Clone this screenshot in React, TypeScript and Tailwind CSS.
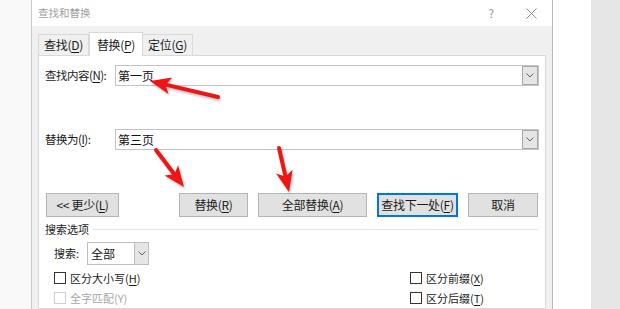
import type { ReactNode } from 'react'

function Key({ children }: { children: ReactNode }) {
  return <span className="underline underline-offset-[2px]">{children}</span>
}

function Chevron() {
  return (
    <svg width="8" height="5" viewBox="0 0 8 5" fill="none">
      <path d="M0.5 0.5 L4 4 L7.5 0.5" stroke="#606060" strokeWidth="1" />
    </svg>
  )
}

function ComboBox({ value }: { value: string }) {
  return (
    <div className="flex-1 h-[21px] flex border border-[#c4c4c4] bg-white">
      <div className="flex-1 flex items-center pl-[2px] text-[12px] text-[#111]">{value}</div>
      <div className="w-[16px] flex items-center justify-center bg-[#e5e5e5] border border-[#a9a9a9]">
        <Chevron />
      </div>
    </div>
  )
}

function Button({ w, primary, children }: { w: string; primary?: boolean; children: ReactNode }) {
  return (
    <div
      className={`${w} h-[24px] flex items-center justify-center text-[12px] tracking-[-0.3px] text-[#1a1a1a] bg-[#e1e1e1] ${
        primary ? 'border-2 border-[#0078d7]' : 'border border-[#b4b4b4]'
      }`}
    >
      {children}
    </div>
  )
}

function Check({ disabled, children }: { disabled?: boolean; children: ReactNode }) {
  return (
    <div className={`flex items-center gap-[4px] h-[16px] text-[11px] ${disabled ? 'text-[#a8a8a8]' : 'text-[#1a1a1a]'}`}>
      <span className={`w-[12px] h-[12px] bg-white border ${disabled ? 'border-[#cfcfcf]' : 'border-[#333]'}`} />
      <span>{children}</span>
    </div>
  )
}

// red annotation arrow: tail -> tip
function Arrow({ x1, y1, x2, y2 }: { x1: number; y1: number; x2: number; y2: number }) {
  const dx = x2 - x1
  const dy = y2 - y1
  const len = Math.hypot(dx, dy)
  const ux = dx / len
  const uy = dy / len
  const px = -uy
  const py = ux
  const head = 21
  const half = 8.5
  const bx = x2 - ux * head
  const by = y2 - uy * head
  const nx = x2 - ux * (head - 5)
  const ny = y2 - uy * (head - 5)
  const pts = [
    [x2, y2],
    [bx + px * half, by + py * half],
    [nx, ny],
    [bx - px * half, by - py * half],
  ]
    .map(p => p.join(','))
    .join(' ')
  return (
    <g>
      <line x1={x1} y1={y1} x2={nx} y2={ny} stroke="#f01515" strokeWidth="4" strokeLinecap="round" />
      <polygon points={pts} fill="#f01515" />
    </g>
  )
}

export default function App() {
  return (
    <div className="relative flex w-[620px] h-[309px] overflow-hidden bg-white font-['Noto_Sans_CJK_SC','Noto_Sans',sans-serif] leading-none">
      <div className="w-[32px] bg-[#f9f9f9] border-r border-[#cdcdcd]" />

      {/* Dialog */}
      <div className="w-[521px] flex flex-col border-r border-[#b9b9b9] shadow-[2px_0_5px_rgba(0,0,0,0.08)]">
        <div className="h-[26px] flex items-center bg-white pl-[6px] pr-[15px]">
          <span className="text-[10.5px] text-[#a0a0a0]">查找和替换</span>
          <span className="ml-auto text-[11px] text-[#8c8c8c]">?</span>
          <svg className="ml-[32px]" width="11" height="11" viewBox="0 0 11 11">
            <path d="M0.5 0.5 L10.5 10.5 M10.5 0.5 L0.5 10.5" stroke="#8c8c8c" strokeWidth="1" />
          </svg>
        </div>

        <div className="flex-1 flex flex-col bg-[#f0f0f0] px-[6px] pt-[6px]">
          {/* Tabs */}
          <div className="flex items-end h-[23px] text-[12px] tracking-[-0.3px] text-[#1a1a1a]">
            <div className="w-[51px] h-[21px] flex items-center justify-center border border-b-0 border-[#d9d9d9]">
              查找(<Key>D</Key>)
            </div>
            <div className="relative z-10 -mb-px w-[54px] h-[24px] flex items-center justify-center bg-white border border-b-0 border-[#d9d9d9]">
              替换(<Key>P</Key>)
            </div>
            <div className="w-[50px] h-[21px] flex items-center justify-center border border-b-0 border-l-0 border-[#d9d9d9]">
              定位(<Key>G</Key>)
            </div>
          </div>

          {/* Panel */}
          <div className="flex-1 flex flex-col bg-white border border-[#d9d9d9] px-[6px] pt-[9px]">
            <div className="flex items-center">
              <span className="w-[70px] text-[11.5px] tracking-[-0.5px] text-[#1a1a1a]">
                查找内容(<Key>N</Key>):
              </span>
              <ComboBox value="第一页" />
            </div>

            <div className="flex items-center mt-[43px]">
              <span className="w-[70px] text-[11.5px] tracking-[-0.5px] text-[#1a1a1a]">
                替换为(<Key>I</Key>):
              </span>
              <ComboBox value="第三页" />
            </div>

            <div className="flex mt-[43px] pl-[1px]">
              <Button w="w-[73px]">
                {'<< 更少('}
                <Key>L</Key>)
              </Button>
              <div className="ml-auto flex gap-[10px] mr-[1px]">
                <Button w="w-[69px]">
                  替换(<Key>R</Key>)
                </Button>
                <Button w="w-[109px]">
                  全部替换(<Key>A</Key>)
                </Button>
                <Button w="w-[81px]" primary>
                  查找下一处(<Key>F</Key>)
                </Button>
                <Button w="w-[70px]">取消</Button>
              </div>
            </div>

            <div className="flex items-center gap-[4px] h-[14px] mt-[5px] pr-[1px]">
              <span className="text-[11px] text-[#1a1a1a]">搜索选项</span>
              <div className="flex-1 h-px bg-[#e3e3e3]" />
            </div>

            <div className="flex items-center mt-[6px] pl-[9px]">
              <span className="w-[33px] text-[11px] text-[#1a1a1a]">搜索:</span>
              <div className="w-[62px] h-[23px] flex border border-[#bdbdbd]">
                <div className="flex-1 flex items-center pl-[3px] text-[12px] text-[#111]">全部</div>
                <div className="w-[14px] flex items-center justify-center bg-[#e5e5e5] border-l border-[#bdbdbd]">
                  <Chevron />
                </div>
              </div>
            </div>

            <div className="grid grid-cols-[356px_1fr] gap-y-[4px] mt-[5px] pl-[9px]">
              <Check>
                区分大小写(<Key>H</Key>)
              </Check>
              <Check>
                区分前缀(<Key>X</Key>)
              </Check>
              <Check disabled>全字匹配(Y)</Check>
              <Check>
                区分后缀(<Key>T</Key>)
              </Check>
            </div>
          </div>
        </div>
      </div>

      <div className="w-[38px] bg-white" />
      <div className="flex-1 bg-[#e6e6e6]" />

      {/* annotation arrows */}
      <svg
        className="absolute inset-0 pointer-events-none drop-shadow-[1px_2px_1px_rgba(0,0,0,0.25)]"
        width="620"
        height="309"
      >
        <Arrow x1={218} y1={97} x2={150} y2={81} />
        <Arrow x1={156} y1={150} x2={184} y2={187} />
        <Arrow x1={279} y1={148} x2={289} y2={192} />
      </svg>
    </div>
  )
}
